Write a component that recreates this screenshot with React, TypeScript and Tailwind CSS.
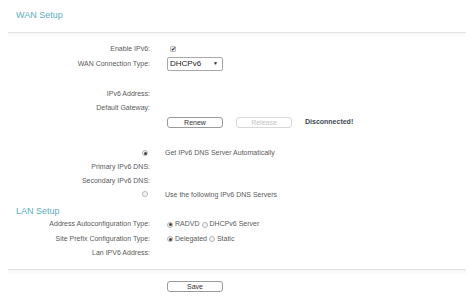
import React from 'react';

function Label({ children }: { children?: React.ReactNode }) {
  return <div className="w-[151px] shrink-0 text-right pr-[1px]">{children}</div>;
}

function Row({ label, h = 'h-[14px]', children }: { label?: React.ReactNode; h?: string; children?: React.ReactNode }) {
  return (
    <div className={`flex items-center ${h}`}>
      <Label>{label}</Label>
      <div className="ml-[16px] flex items-center gap-[2px]">{children}</div>
    </div>
  );
}

function Radio({ on }: { on?: boolean }) {
  return (
    <span className="inline-flex h-[6px] w-[6px] items-center justify-center rounded-full border border-[#b5b5b5] bg-[#f4f4f4]">
      {on && <span className="h-[3px] w-[3px] rounded-full bg-[#444]" />}
    </span>
  );
}

function Btn({ children, disabled }: { children: React.ReactNode; disabled?: boolean }) {
  return (
    <button
      className={`h-[11px] w-[56px] rounded-[3px] border bg-white text-[7px] leading-none ${
        disabled ? 'border-[#d8d8d8] text-[#c4c4c4]' : 'border-[#9a9a9a] text-[#333]'
      }`}
    >
      {children}
    </button>
  );
}

function Divider() {
  return (
    <div className="mx-[8px]">
      <div className="h-[1px] bg-[#e2e2e2]" />
      <div className="h-[5px] bg-gradient-to-b from-[#f6f6f6] to-white" />
    </div>
  );
}

export default function App() {
  return (
    <div className="h-[298px] w-[474px] overflow-hidden bg-white text-[7px] text-[#5a5a5a]" style={{ fontFamily: '"Liberation Sans", Arial, sans-serif' }}>
      <div className="flex h-[32px] items-center pl-[16px] text-[9px] text-[#5aaec1]">WAN Setup</div>
      <Divider />
      <div className="mt-[4px]" />
      <Row label="Enable IPv6:">
        <span className="ml-[3px] inline-flex h-[6px] w-[6px] items-center justify-center rounded-[1px] border border-[#bbb] bg-[#f2f2f2] text-[6px] leading-none text-[#222]">
          ✔
        </span>
      </Row>
      <Row label="WAN Connection Type:" h="h-[16px]">
        <div className="flex h-[14px] w-[56px] items-center justify-between rounded-[2px] border border-[#a9a9a9] pl-[2px] pr-[4px] text-[8px] text-[#222]">
          <span>DHCPv6</span>
          <span className="text-[5px]">▼</span>
        </div>
      </Row>
      <div className="h-[15px]" />
      <Row label="IPv6 Address:" />
      <Row label="Default Gateway:" />
      <Row h="h-[15px]">
        <Btn>Renew</Btn>
        <span className="ml-[11px]">
          <Btn disabled>Release</Btn>
        </span>
        <span className="ml-[11px] text-[7px] font-bold text-[#3b4a55]">Disconnected!</span>
      </Row>
      <div className="h-[16px]" />
      <Row label={<span className="mr-[2px] inline-flex"><Radio on /></span>}>
        <span className="-ml-[2px]">Get IPv6 DNS Server Automatically</span>
      </Row>
      <Row label="Primary IPv6 DNS:" />
      <Row label="Secondary IPv6 DNS:" />
      <Row label={<span className="mr-[2px] inline-flex"><Radio /></span>}>
        <span className="-ml-[2px]">Use the following IPv6 DNS Servers</span>
      </Row>
      <div className="flex h-[15px] items-end pb-[1px] pl-[16px] text-[9px] leading-none text-[#5aaec1]">LAN Setup</div>
      <Row label="Address Autoconfiguration Type:" h="h-[15px]">
        <Radio on />
        <span>RADVD</span>
        <Radio />
        <span>DHCPv6 Server</span>
      </Row>
      <Row label="Site Prefix Configuration Type:">
        <Radio on />
        <span>Delegated</span>
        <Radio />
        <span>Static</span>
      </Row>
      <Row label="Lan IPV6 Address:" />
      <div className="h-[9px]" />
      <Divider />
      <div className="h-[4px]" />
      <Row h="h-[14px]">
        <Btn>Save</Btn>
      </Row>
    </div>
  );
}
